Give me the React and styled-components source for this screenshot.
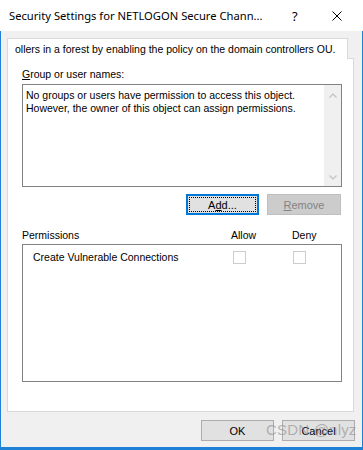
import React from "react";
import styled, { createGlobalStyle } from "styled-components";

const Global = createGlobalStyle`
  html, body { margin: 0; padding: 0; background: #ffffff; }
  body { font-family: "Liberation Sans", Arial, sans-serif; }
  * { box-sizing: border-box; }
`;

const Window = styled.div`
  position: relative;
  width: 363px;
  height: 450px;
  display: flex;
  flex-direction: column;
  background: #f0f0f0;
  overflow: hidden;
`;

const TitleBar = styled.div`
  height: 31px;
  flex: none;
  display: flex;
  align-items: center;
  background: #ffffff;
  padding-left: 9px;
`;

const TitleText = styled.div`
  font-family: "Noto Sans", "Liberation Sans", sans-serif;
  font-size: 11.2px;
  color: #000;
  width: 270px;
  white-space: nowrap;
`;

const HelpGlyph = styled.div`
  font-family: "Noto Sans", sans-serif;
  font-size: 13px;
  color: #000;
  margin-left: 13px;
  width: 40px;
`;

const CloseIcon = styled.svg`
  width: 10px;
  height: 10px;
`;

const Body = styled.div`
  flex: 1;
  display: flex;
  flex-direction: column;
  border-left: 1px solid #1e81d6;
  border-right: 1px solid #1e81d6;
  border-bottom: 3px solid #1e81d6;
  padding: 7px 0 0 6px;
`;

const TabHeader = styled.div`
  position: relative;
  z-index: 1;
  width: 341px;
  height: 21px;
  margin-bottom: -1px;
  background: #ffffff;
  border: 1px solid #d9d9d9;
  border-bottom: none;
  display: flex;
  align-items: center;
  padding-left: 7px;
  font-size: 10.5px;
  color: #000;
  white-space: nowrap;
  overflow: hidden;
`;

const TabPage = styled.div`
  width: 347px;
  height: 354px;
  background: #ffffff;
  border: 1px solid #d9d9d9;
  padding: 9px 10px 0 14px;
  display: flex;
  flex-direction: column;
`;

const Label = styled.div`
  font-size: 10.5px;
  line-height: 13px;
  color: #000;
  u { text-decoration: underline; }
`;

const ListBox = styled.div`
  position: relative;
  margin-top: 3px;
  width: 320px;
  height: 103px;
  border: 1px solid #828282;
  background: #fff;
  display: flex;
`;

const ListText = styled.div`
  flex: 1;
  padding: 4px 0 0 3px;
  font-size: 10.5px;
  line-height: 13px;
  color: #000;
`;

const ScrollBar = styled.div`
  width: 17px;
  background: #f0f0f0;
  display: flex;
  flex-direction: column;
  justify-content: space-between;
  align-items: center;
  padding: 8px 0 6px;
`;

const Chevron = styled.svg`
  width: 8px;
  height: 5px;
`;

const ButtonRow = styled.div`
  display: flex;
  justify-content: flex-end;
  gap: 8px;
  margin-top: 7px;
  padding-right: 2px;
`;

const Button = styled.div`
  position: relative;
  width: ${(p) => p.$w || 73}px;
  height: 21px;
  display: flex;
  align-items: center;
  justify-content: center;
  font-size: 11px;
  background: ${(p) => (p.$disabled ? "#cccccc" : "#e1e1e1")};
  color: ${(p) => (p.$disabled ? "#838383" : "#000")};
  border: ${(p) =>
    p.$focused ? "2px solid #0078d7" : p.$disabled ? "1px solid #bfbfbf" : "1px solid #adadad"};
  u { text-decoration: underline; }
`;

const FocusRect = styled.div`
  position: absolute;
  inset: 1px;
  border: 1px dotted #000;
  pointer-events: none;
`;

const PermHeader = styled.div`
  display: grid;
  grid-template-columns: 209px 61px 1fr;
  margin-top: 14px;
  font-size: 10.5px;
  line-height: 13px;
  color: #000;
`;

const PermBox = styled.div`
  margin-top: 2px;
  width: 320px;
  height: 138px;
  border: 1px solid #828282;
  background: #fff;
  padding: 6px 0 0 10px;
`;

const PermRow = styled.div`
  display: grid;
  grid-template-columns: 200px 60px 1fr;
  align-items: center;
  font-size: 10.5px;
  line-height: 13px;
  color: #000;
`;

const CheckBox = styled.div`
  width: 13px;
  height: 13px;
  border: 1px solid #cccccc;
  background: #fff;
`;

const BottomRow = styled.div`
  display: flex;
  justify-content: flex-end;
  gap: 8px;
  margin-top: 8px;
  width: 348px;
`;

const Watermark = styled.div`
  position: absolute;
  left: 266px;
  top: 421px;
  font-family: "Liberation Sans", Arial, sans-serif;
  font-size: 15px;
  color: rgba(140, 140, 140, 0.6);
  letter-spacing: 0.2px;
  white-space: nowrap;
  pointer-events: none;
`;

export default function App() {
  return (
    <>
      <Global />
      <Window>
        <TitleBar>
          <TitleText>Security Settings for NETLOGON Secure Chann...</TitleText>
          <HelpGlyph>?</HelpGlyph>
          <CloseIcon viewBox="0 0 10 10">
            <path d="M0.5 0.5 L9.5 9.5 M9.5 0.5 L0.5 9.5" stroke="#000" strokeWidth="1" fill="none" />
          </CloseIcon>
        </TitleBar>
        <Body>
          <TabHeader>ollers in a forest by enabling the policy on the domain controllers OU.</TabHeader>
          <TabPage>
            <Label>
              <u>G</u>roup or user names:
            </Label>
            <ListBox>
              <ListText>
                No groups or users have permission to access this object.
                <br />
                However, the owner of this object can assign permissions.
              </ListText>
              <ScrollBar>
                <Chevron viewBox="0 0 8 5">
                  <path d="M0.5 4.5 L4 1 L7.5 4.5" stroke="#c2c2c2" strokeWidth="1.2" fill="none" />
                </Chevron>
                <Chevron viewBox="0 0 8 5">
                  <path d="M0.5 0.5 L4 4 L7.5 0.5" stroke="#c2c2c2" strokeWidth="1.2" fill="none" />
                </Chevron>
              </ScrollBar>
            </ListBox>
            <ButtonRow>
              <Button $focused>
                <FocusRect />
                A<u>d</u>d...
              </Button>
              <Button $disabled $w={74}>
                <span>
                  <u>R</u>emove
                </span>
              </Button>
            </ButtonRow>
            <PermHeader>
              <span>Permissions</span>
              <span>Allow</span>
              <span>Deny</span>
            </PermHeader>
            <PermBox>
              <PermRow>
                <span>Create Vulnerable Connections</span>
                <CheckBox />
                <CheckBox />
              </PermRow>
            </PermBox>
          </TabPage>
          <BottomRow>
            <Button>OK</Button>
            <Button>Cancel</Button>
          </BottomRow>
        </Body>
        <Watermark>CSDN @nlyz</Watermark>
      </Window>
    </>
  );
}
